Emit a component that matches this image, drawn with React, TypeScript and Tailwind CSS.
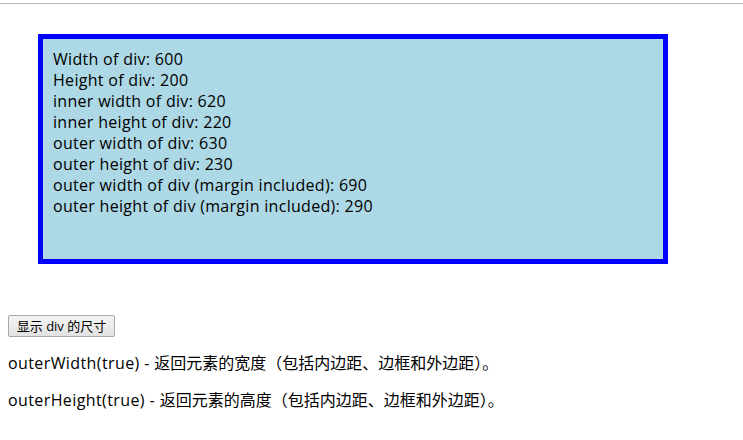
import React from 'react';

const lines = [
  'Width of div: 600',
  'Height of div: 200',
  'inner width of div: 620',
  'inner height of div: 220',
  'outer width of div: 630',
  'outer height of div: 230',
  'outer width of div (margin included): 690',
  'outer height of div (margin included): 290',
];

const App = () => {
  return (
    <div
      className="min-h-[440px] bg-white text-black text-[16px] leading-[21px]"
      style={{ fontFamily: '"Segoe UI", "Open Sans", "Noto Sans CJK SC", sans-serif' }}
    >
      <div className="h-[3px]"></div>
      <div className="h-px bg-[#b9b9b9]"></div>
      <div className="px-2 pt-[30px] pb-2">
        {/* Box */}
        <div className="w-[630px] h-[230px] mx-[30px] mb-[30px] border-[5px] border-[#0000ff] bg-[#add8e6] p-[10px] tracking-[0.3px]">
          {lines.map((l) => (
            <div key={l}>{l}</div>
          ))}
        </div>
        <div className="h-[21px]"></div>
        <button className="h-[22px] w-[107px] border border-[#a8a8a8] rounded-[2px] bg-gradient-to-b from-[#f4f4f4] to-[#e2e2e2] text-[13px] leading-[20px] text-black">
          显示 div 的尺寸
        </button>
        <p className="mt-[16px]">
          <span className="tracking-[0.4px]">outerWidth(true) - </span>返回元素的宽度（包括内边距、边框和外边距）。
        </p>
        <p className="mt-[16px]">
          <span className="tracking-[0.4px]">outerHeight(true) - </span>返回元素的高度（包括内边距、边框和外边距）。
        </p>
      </div>
    </div>
  );
};

export default App;
